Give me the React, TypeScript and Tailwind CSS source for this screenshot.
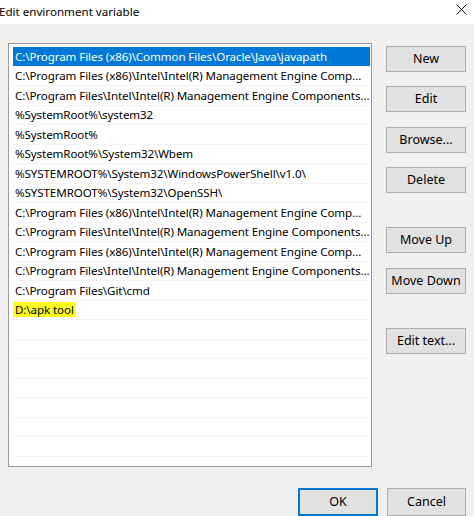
import React from "react";

const paths: string[] = [
  "C:\\Program Files (x86)\\Common Files\\Oracle\\Java\\javapath",
  "C:\\Program Files (x86)\\Intel\\Intel(R) Management Engine Comp...",
  "C:\\Program Files\\Intel\\Intel(R) Management Engine Components...",
  "%SystemRoot%\\system32",
  "%SystemRoot%",
  "%SystemRoot%\\System32\\Wbem",
  "%SYSTEMROOT%\\System32\\WindowsPowerShell\\v1.0\\",
  "%SYSTEMROOT%\\System32\\OpenSSH\\",
  "C:\\Program Files (x86)\\Intel\\Intel(R) Management Engine Comp...",
  "C:\\Program Files\\Intel\\Intel(R) Management Engine Components...",
  "C:\\Program Files (x86)\\Intel\\Intel(R) Management Engine Comp...",
  "C:\\Program Files\\Intel\\Intel(R) Management Engine Components...",
  "C:\\Program Files\\Git\\cmd",
];

const emptyRows = Array.from({ length: 9 });

const SideButton: React.FC<{ label: string; className?: string }> = ({ label, className = "" }) => (
  <button
    className={`h-[26px] w-[80px] bg-[#e1e1e1] border border-[#adadad] text-[12.5px] text-black flex items-center justify-center ${className}`}
  >
    {label}
  </button>
);

export default function App() {
  return (
    <div
      className="w-[474px] h-[516px] overflow-hidden bg-[#f0f0f0] flex flex-col text-black"
      style={{ fontFamily: '"Noto Sans", "Liberation Sans", sans-serif' }}
    >
      {/* title bar */}
      <div className="h-[24px] bg-white flex items-center justify-between shrink-0">
        <span className="text-[11.6px] ml-[-1px]">Edit environment variable</span>
        <svg width="11" height="11" viewBox="0 0 11 11" className="mr-[7px] mb-[6px]">
          <path d="M0.5 0.5 L10.5 10.5 M10.5 0.5 L0.5 10.5" stroke="#111" strokeWidth="1" fill="none" />
        </svg>
      </div>

      <div className="flex pl-[8px] pt-[19px]">
        {/* list */}
        <div className="w-[364px] h-[424px] bg-white border border-[#9a9a9a] overflow-hidden pt-[3px] pl-[4px] pr-[1px]">
          {paths.map((p, i) => (
            <div
              key={i}
              className={`h-[19.5px] flex items-center pl-[2px] text-[11.6px] tracking-[-0.1px] whitespace-nowrap overflow-hidden border-b border-[#f3f3f3] ${
                i === 0 ? "bg-[#0078d7] text-white border-[#0078d7]" : ""
              }`}
            >
              {p}
            </div>
          ))}
          <div className="h-[19.5px] flex items-center text-[11.6px] tracking-[-0.1px] whitespace-nowrap border-b border-[#f3f3f3]">
            <span className="bg-[#ffff1f] px-[2px] leading-[15px]">D:\apk tool</span>
          </div>
          {emptyRows.map((_, i) => (
            <div key={i} className="h-[19.5px] border-b border-[#f3f3f3]" />
          ))}
        </div>

        {/* side buttons */}
        <div className="flex flex-col ml-[14px] pt-[3px]">
          <SideButton label="New" />
          <SideButton label="Edit" className="mt-[14px]" />
          <SideButton label="Browse..." className="mt-[15px]" />
          <SideButton label="Delete" className="mt-[14px]" />
          <SideButton label="Move Up" className="mt-[34px]" />
          <SideButton label="Move Down" className="mt-[15px]" />
          <SideButton label="Edit text..." className="mt-[34px]" />
        </div>
      </div>

      {/* footer */}
      <div className="flex justify-end pr-[8px] mt-[21px] gap-[9px]">
        <button className="h-[28px] w-[80px] bg-[#e1e1e1] border-2 border-[#0078d7] text-[12.5px] flex items-center justify-center">
          OK
        </button>
        <button className="h-[28px] w-[79px] bg-[#e1e1e1] border border-[#adadad] text-[12.5px] flex items-center justify-center">
          Cancel
        </button>
      </div>
    </div>
  );
}
